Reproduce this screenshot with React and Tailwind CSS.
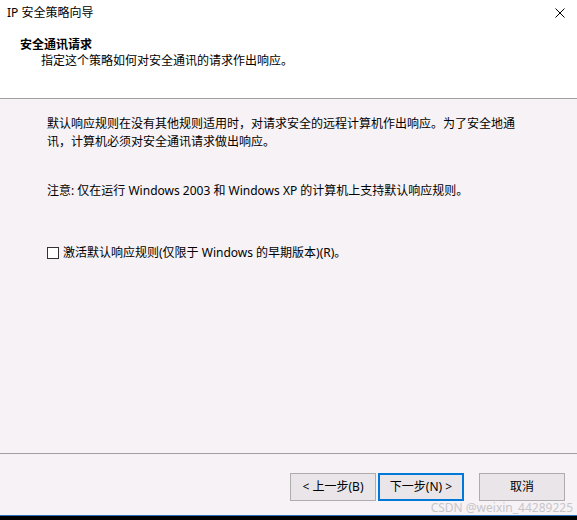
// IP security policy wizard – "secure communication request" page
const font = {
  fontFamily: '"Noto Sans", "Noto Sans CJK SC", sans-serif',
};

function CloseIcon() {
  return (
    <svg width="10" height="10" viewBox="0 0 10 10" className="block">
      <path d="M0.5 0.5 L9.5 9.5 M9.5 0.5 L0.5 9.5" stroke="#000" strokeWidth="1" />
    </svg>
  );
}

function WizardButton({ children, focused }) {
  return (
    <button
      className={
        focused
          ? 'w-[86px] h-[28px] border-2 border-[#0078d7] bg-[#e9e5e9] text-[12px] text-black'
          : 'w-[86px] h-[28px] border border-[#adadad] bg-[#e9e5e9] text-[12px] text-black'
      }
    >
      {children}
    </button>
  );
}

export default function App() {
  return (
    <div
      className="w-[577px] h-[520px] flex flex-col bg-[#f6f2f6] text-black text-[12px] overflow-hidden"
      style={font}
    >
      {/* Title bar and page header */}
      <div className="h-[99px] bg-white border-b border-[#a0a0a0] flex flex-col">
        <div className="h-[26px] flex items-center justify-between pl-[7px] pr-[12px]">
          <span className="leading-[26px]">IP 安全策略向导</span>
          <CloseIcon />
        </div>
        <div className="mt-[11px] pl-[20px]">
          <div className="font-bold leading-[16px]">安全通讯请求</div>
          <div className="pl-[21px] leading-[16px]">指定这个策略如何对安全通讯的请求作出响应。</div>
        </div>
      </div>

      {/* Page body */}
      <div className="flex-1 pl-[47px] pt-[16px]">
        <p className="leading-[18px]">
          默认响应规则在没有其他规则适用时，对请求安全的远程计算机作出响应。为了安全地通
          <br />
          讯，计算机必须对安全通讯请求做出响应。
        </p>
        <p className="mt-[31px] leading-[18px]">
          注意: 仅在运行 Windows 2003 和 Windows XP 的计算机上支持默认响应规则。
        </p>
        <label className="mt-[44px] flex items-center gap-[4px] leading-[18px]">
          <span className="w-[12px] h-[12px] border border-[#333] bg-white"></span>
          <span>激活默认响应规则(仅限于 Windows 的早期版本)(R)。</span>
        </label>
      </div>

      {/* Navigation buttons */}
      <div className="h-[62px] border-t border-[#a0a0a0] flex justify-end items-start pt-[19px] pr-[12px] relative">
        <div className="flex gap-[2px]">
          <WizardButton>&lt; 上一步(B)</WizardButton>
          <WizardButton focused>下一步(N) &gt;</WizardButton>
        </div>
        <div className="ml-[15px]">
          <WizardButton>取消</WizardButton>
        </div>
        <span className="absolute right-[4px] bottom-[0px] text-[12px] leading-[14px] text-[#c8c6c8]">
          CSDN @weixin_44289225
        </span>
      </div>
      <div className="h-[5px] bg-black border-t border-[#2a6fb5]"></div>
    </div>
  );
}
